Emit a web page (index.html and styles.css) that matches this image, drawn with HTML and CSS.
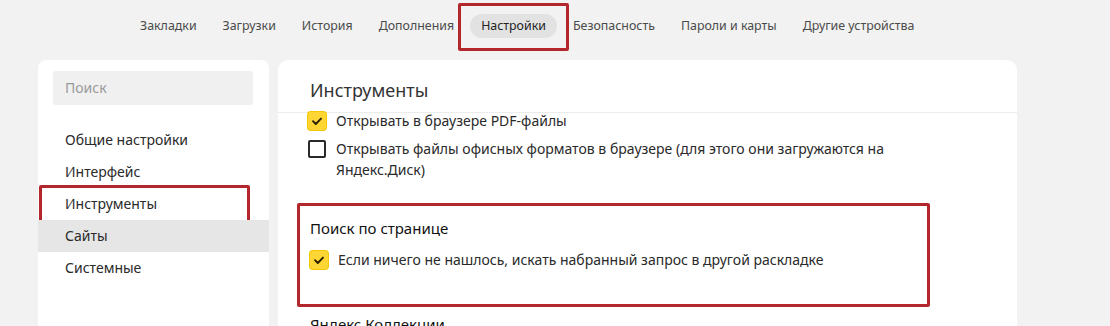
FILE: index.html
```html
<!DOCTYPE html>
<html lang="ru">
<head>
<meta charset="utf-8">
<title>Настройки</title>
<link rel="stylesheet" href="styles.css">
</head>
<body>
<nav class="topnav">
  <a class="nav-item">Закладки</a>
  <a class="nav-item">Загрузки</a>
  <a class="nav-item">История</a>
  <a class="nav-item">Дополнения</a>
  <a class="nav-item nav-active">Настройки<span class="mark mark-nav"></span></a>
  <a class="nav-item">Безопасность</a>
  <a class="nav-item">Пароли и карты</a>
  <a class="nav-item">Другие устройства</a>
</nav>
<div class="layout">
  <aside class="sidebar">
    <div class="search">Поиск</div>
    <ul class="menu">
      <li class="menu-item">Общие настройки</li>
      <li class="menu-item">Интерфейс</li>
      <li class="menu-item menu-marked">Инструменты<span class="mark mark-side"></span></li>
      <li class="menu-item menu-hover">Сайты</li>
      <li class="menu-item">Системные</li>
    </ul>
  </aside>
  <main class="content">
    <header class="content-head">Инструменты</header>
    <div class="scroll">
      <div class="option option-first">
        <span class="cb cb-on"><svg viewBox="0 0 18 18" width="18" height="18"><path d="M5 9.2l2.8 2.8L13 6.6" fill="none" stroke="#2b2100" stroke-width="1.9" stroke-linecap="round" stroke-linejoin="round"/></svg></span>
        <span class="opt-text">Открывать в браузере PDF-файлы</span>
      </div>
      <div class="option">
        <span class="cb"></span>
        <span class="opt-text">Открывать файлы офисных форматов в браузере (для этого они загружаются на<br>Яндекс.Диск)</span>
      </div>
      <section class="group group-marked">
        <h3 class="group-title">Поиск по странице</h3>
        <div class="option">
          <span class="cb cb-on"><svg viewBox="0 0 18 18" width="18" height="18"><path d="M5 9.2l2.8 2.8L13 6.6" fill="none" stroke="#2b2100" stroke-width="1.9" stroke-linecap="round" stroke-linejoin="round"/></svg></span>
          <span class="opt-text">Если ничего не нашлось, искать набранный запрос в другой раскладке</span>
        </div>
        <span class="mark mark-main"></span>
      </section>
      <section class="group group-next">
        <h3 class="group-title">Яндекс.Коллекции</h3>
      </section>
    </div>
  </main>
</div>
</body>
</html>
```
FILE: styles.css
```css
* { box-sizing: border-box; }
html, body { margin: 0; padding: 0; }
body {
  background: #f2f2f2;
  font-family: "Noto Sans", "Open Sans", sans-serif;
  color: #222;
  width: 1110px;
  height: 326px;
  overflow: hidden;
}
.topnav {
  display: flex;
  align-items: center;
  height: 50px;
  padding-left: 130px;
  padding-top: 2px;
  gap: 6px;
  font-size: 12.4px;
}
.nav-item {
  position: relative;
  color: #4a4a4a;
  padding: 0 10px;
  height: 24px;
  line-height: 24px;
  border-radius: 12px;
  white-space: nowrap;
}
.nav-active {
  background: #e2e2e2;
  color: #222;
  padding: 0 11px;
}
.mark {
  position: absolute;
  border: 3px solid #b3262b;
  pointer-events: none;
}
.mark-nav {
  left: -12px;
  right: -12px;
  top: -11px;
  bottom: -13px;
  border-radius: 2px;
}
.layout {
  display: flex;
  padding-left: 38px;
  padding-top: 10px;
  gap: 9px;
}
.sidebar {
  width: 231px;
  height: 266px;
  background: #fff;
  border-radius: 8px 8px 0 0;
  padding-top: 11px;
}
.search {
  margin: 0 16px 0 15px;
  height: 34px;
  background: #f0f0f0;
  border-radius: 3px;
  color: #9a9a9a;
  font-size: 14px;
  line-height: 34px;
  padding-left: 12px;
}
.menu {
  list-style: none;
  margin: 19px 0 0;
  padding: 0;
}
.menu-item {
  position: relative;
  height: 32px;
  line-height: 32px;
  padding-left: 27px;
  font-size: 14px;
  color: #2a2a2a;
}
.menu-hover { background: #e6e6e6; }
.mark-side {
  left: 1px;
  top: -3px;
  width: 211px;
  height: 39px;
  border-radius: 2px;
}
.content {
  width: 739px;
  height: 266px;
  background: #fff;
  border-radius: 10px 10px 0 0;
  overflow: hidden;
}
.content-head {
  height: 53px;
  padding-left: 32px;
  font-size: 18px;
  line-height: 60px;
  color: #333;
  border-bottom: 1px solid #ececec;
}
.scroll {
  padding-left: 30px;
}
.option {
  display: flex;
  align-items: flex-start;
  gap: 10px;
  font-size: 14px;
  line-height: 21px;
  color: #2a2a2a;
}
.option-first {
  margin-top: -3px;
  height: 28px;
}
.cb {
  flex: none;
  width: 18px;
  height: 18px;
  margin-top: 2px;
  border: 2px solid #2a2a2a;
  border-radius: 2px;
  background: #fff;
}
.cb-on {
  border: none;
  background: #ffd633;
  border-radius: 3px;
  box-shadow: 0 0 0 1px #f3c800;
}
.cb svg { display: block; }
.group {
  position: relative;
  padding-top: 38px;
}
.group-title {
  margin: 0 0 10px 2px;
  font-size: 15px;
  font-weight: 400;
  line-height: 21px;
  color: #111;
}
.group-marked .option { padding-left: 2px; }
.mark-main {
  left: -11px;
  top: 23px;
  width: 633px;
  height: 104px;
  border-radius: 2px;
}
.group-next { padding-top: 44px; }
```
